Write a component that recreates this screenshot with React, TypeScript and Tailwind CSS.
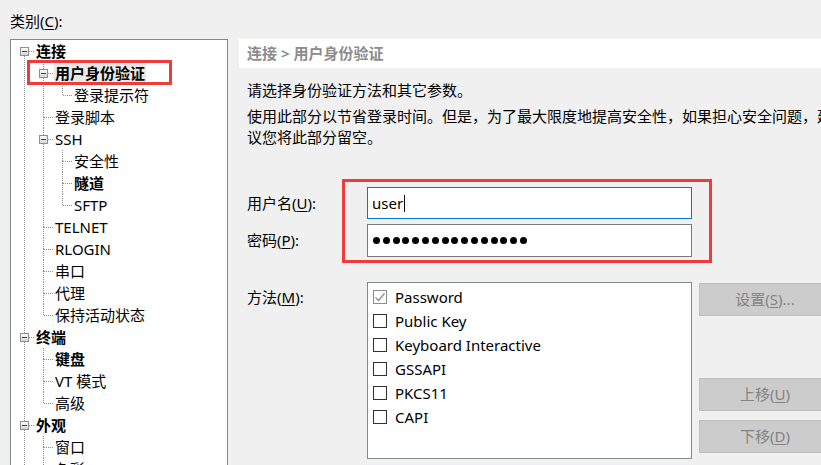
import React from 'react';

type Row = {
	label: string;
	level: number;
	bold?: boolean;
	box?: boolean;
	last?: boolean;
	first?: boolean;
	selected?: boolean;
	anc: boolean[];
};

const rows: Row[] = [
	{ label: '连接', level: 0, bold: true, box: true, first: true, anc: [] },
	{ label: '用户身份验证', level: 1, bold: true, box: true, selected: true, anc: [true] },
	{ label: '登录提示符', level: 2, last: true, anc: [true, true] },
	{ label: '登录脚本', level: 1, anc: [true] },
	{ label: 'SSH', level: 1, box: true, anc: [true] },
	{ label: '安全性', level: 2, anc: [true, true] },
	{ label: '隧道', level: 2, bold: true, anc: [true, true] },
	{ label: 'SFTP', level: 2, last: true, anc: [true, true] },
	{ label: 'TELNET', level: 1, anc: [true] },
	{ label: 'RLOGIN', level: 1, anc: [true] },
	{ label: '串口', level: 1, anc: [true] },
	{ label: '代理', level: 1, anc: [true] },
	{ label: '保持活动状态', level: 1, last: true, anc: [true] },
	{ label: '终端', level: 0, bold: true, box: true, anc: [] },
	{ label: '键盘', level: 1, bold: true, anc: [true] },
	{ label: 'VT 模式', level: 1, anc: [true] },
	{ label: '高级', level: 1, last: true, anc: [true] },
	{ label: '外观', level: 0, bold: true, box: true, anc: [] },
	{ label: '窗口', level: 1, anc: [true] },
	{ label: '色彩', level: 1, anc: [true] },
];

const methods = ['Password', 'Public Key', 'Keyboard Interactive', 'GSSAPI', 'PKCS11', 'CAPI'];

const DOT = '#8e8e8e';

function Pipe({ on }: { on: boolean }) {
	return (
		<svg width="19" height="22" className="shrink-0" shapeRendering="crispEdges">
			{on && <line x1="9.5" y1="0" x2="9.5" y2="22" stroke={DOT} strokeDasharray="1 1" />}
		</svg>
	);
}

function Node({ row }: { row: Row }) {
	const { first, last, box } = row;
	return (
		<svg width="19" height="22" className="shrink-0" shapeRendering="crispEdges">
			<defs>
				<linearGradient id="bx" x1="0" y1="0" x2="0" y2="1">
					<stop offset="0" stopColor="#ffffff" />
					<stop offset="1" stopColor="#d4d4d4" />
				</linearGradient>
			</defs>
			{!first && <line x1="9.5" y1="0" x2="9.5" y2={box ? 7 : 11} stroke={DOT} strokeDasharray="1 1" />}
			{!last && <line x1="9.5" y1={box ? 16 : 11} x2="9.5" y2="22" stroke={DOT} strokeDasharray="1 1" />}
			<line x1={box ? 14 : 10} y1="11.5" x2="19" y2="11.5" stroke={DOT} strokeDasharray="1 1" />
			{box && (
				<>
					<rect x="5.5" y="7.5" width="8" height="8" fill="url(#bx)" stroke="#8f8f8f" />
					<line x1="7" y1="11.5" x2="12" y2="11.5" stroke="#2c3d73" />
				</>
			)}
		</svg>
	);
}

function TreeRow({ row }: { row: Row }) {
	return (
		<div className="flex items-center h-[22px]">
			{row.anc.map((on, i) => (
				<Pipe key={i} on={on} />
			))}
			<Node row={row} />
			<span
				className={`ml-[1px] px-[1px] leading-[20px] whitespace-nowrap ${row.bold ? 'font-bold' : ''} ${row.selected ? 'bg-[#e8e8e8]' : ''}`}
			>
				{row.label}
			</span>
		</div>
	);
}

function Checkbox({ checked }: { checked: boolean }) {
	return (
		<span
			className={`w-[14px] h-[14px] shrink-0 border bg-white flex items-center justify-center ${checked ? 'border-[#8c8c8c]' : 'border-[#333333]'}`}
		>
			{checked && (
				<svg width="12" height="12" viewBox="0 0 12 12">
					<polyline points="1.5,6.5 4.5,9.5 10.5,2.5" fill="none" stroke="#8c8c8c" strokeWidth="1.2" />
				</svg>
			)}
		</span>
	);
}

function GrayButton({ children, className = '' }: { children: React.ReactNode; className?: string }) {
	return (
		<div
			className={`w-[132px] h-[33px] bg-[#cccccc] border border-[#bfbfbf] text-[#838383] flex items-center justify-center ${className}`}
		>
			{children}
		</div>
	);
}

export default function App() {
	return (
		<div className="w-[821px] h-[465px] overflow-hidden bg-[#f0f0f0] text-[15px] text-black font-['Noto_Sans','Noto_Sans_CJK_SC',sans-serif] flex flex-col pt-[10px] pl-[10px]">
			<div className="h-[22px] leading-[22px]">
				类别(<span className="underline underline-offset-2">C</span>):
			</div>

			<div className="flex mt-[7px]">
				{/* category tree */}
				<div className="relative w-[218px] h-[460px] shrink-0 border border-[#828790] bg-white pl-[4px]">
					{rows.map((r, i) => (
						<TreeRow key={i} row={r} />
					))}
					<div className="absolute left-[16px] top-[20px] w-[145px] h-[25px] border-[3px] border-[#f03b3b] pointer-events-none" />
				</div>

				{/* settings page */}
				<div className="ml-[11px] w-[600px] shrink-0">
					<div className="h-[29px] bg-white pl-[8px] leading-[29px] font-bold text-[#8c8c8c] whitespace-nowrap">
						连接 &gt; 用户身份验证
					</div>

					<div className="pl-[8px] leading-[21px]">
						<p className="mt-[12px]">请选择身份验证方法和其它参数。</p>
						<p className="mt-[5px] w-[588px]">
							使用此部分以节省登录时间。但是，为了最大限度地提高安全性，如果担心安全问题，建议您将此部分留空。
						</p>

						<div className="relative mt-[39px]">
							<div className="flex items-center">
								<label className="w-[120px] shrink-0">
									用户名(<span className="underline underline-offset-2">U</span>):
								</label>
								<div className="w-[325px] h-[32px] border border-[#0078d7] bg-white flex items-center pl-[4px]">
									<span>user</span>
									<span className="w-[1px] h-[17px] bg-black ml-[1px]" />
								</div>
							</div>
							<div className="flex items-center mt-[5px]">
								<label className="w-[120px] shrink-0">
									密码(<span className="underline underline-offset-2">P</span>):
								</label>
								<div className="w-[325px] h-[33px] border border-[#7a7a7a] bg-white flex items-center pl-[5px] gap-[2.8px]">
									{Array.from({ length: 16 }).map((_, i) => (
										<span key={i} className="w-[7px] h-[7px] rounded-full bg-black" />
									))}
								</div>
							</div>
							<div className="absolute left-[95px] top-[-8px] w-[370px] h-[84px] border-[3px] border-[#f03b3b] pointer-events-none" />
						</div>

						<div className="flex mt-[25px]">
							<label className="w-[120px] shrink-0 pt-[4px] leading-[22px]">
								方法(<span className="underline underline-offset-2">M</span>):
							</label>
							<div className="w-[325px] h-[177px] border border-[#828790] bg-white pt-[2px] pl-[5px]">
								{methods.map((m, i) => (
									<div key={m} className="h-[24px] flex items-center gap-[8px]">
										<Checkbox checked={i === 0} />
										<span className="whitespace-nowrap">{m}</span>
									</div>
								))}
							</div>
							<div className="ml-[7px] flex flex-col pt-[1px]">
								<GrayButton>
									设置(<span className="underline underline-offset-2">S</span>)...
								</GrayButton>
								<GrayButton className="mt-[62px]">
									上移(<span className="underline underline-offset-2">U</span>)
								</GrayButton>
								<GrayButton className="mt-[9px]">
									下移(<span className="underline underline-offset-2">D</span>)
								</GrayButton>
							</div>
						</div>
					</div>
				</div>
			</div>
		</div>
	);
}
